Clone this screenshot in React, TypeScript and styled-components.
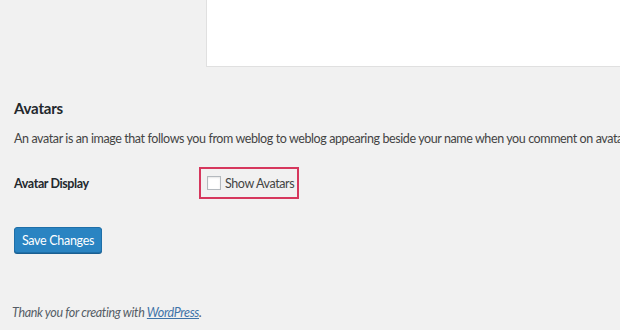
import styled, { createGlobalStyle } from "styled-components";

const GlobalStyle = createGlobalStyle`
  html, body {
    margin: 0;
    padding: 0;
    background: #f1f1f1;
    overflow: hidden;
  }
  body {
    font-family: Lato, "Open Sans", sans-serif;
    color: #444;
    font-size: 12.5px;
    letter-spacing: -0.4px;
  }
`;

const Page = styled.div`
  width: 620px;
  height: 330px;
  overflow: hidden;
  display: flex;
  flex-direction: column;
`;

const PreviewBox = styled.div`
  height: 66px;
  margin-left: 206px;
  background: #fff;
  border-left: 1px solid #e0e0e0;
  border-bottom: 1px solid #e0e0e0;
`;

const Content = styled.div`
  padding-left: 14px;
  display: flex;
  flex-direction: column;
`;

const Heading = styled.h2`
  margin: 31px 0 0;
  font-size: 15px;
  font-weight: 700;
  color: #23282d;
  line-height: 20px;
  letter-spacing: -0.2px;
`;

const Description = styled.p`
  margin: 12px 0 0;
  line-height: 18px;
  white-space: nowrap;
  color: #444;
`;

const SettingRow = styled.div`
  display: flex;
  align-items: center;
  margin-top: 19px;
`;

const RowLabel = styled.div`
  width: 185px;
  font-weight: 700;
  color: #23282d;
`;

const Highlight = styled.label`
  display: flex;
  align-items: center;
  gap: 4px;
  box-sizing: border-box;
  width: 100px;
  height: 32px;
  padding-left: 6px;
  border: 2px solid #d6375d;
  white-space: nowrap;
  color: #444;
`;

const CheckBox = styled.span`
  flex: none;
  width: 14px;
  height: 14px;
  background: #fff;
  border: 1px solid #b4b9be;
  box-shadow: inset 0 1px 2px rgba(0, 0, 0, 0.1);
  box-sizing: border-box;
`;

const SaveButton = styled.button`
  align-self: flex-start;
  margin-top: 28px;
  width: 88px;
  height: 26px;
  padding: 0;
  background: #2a84c2;
  border: 1px solid #1f6fa8;
  border-radius: 3px;
  color: #fff;
  font-family: Lato, "Open Sans", sans-serif;
  font-size: 12.5px;
  letter-spacing: -0.3px;
  box-shadow: 0 1px 0 #1a5f91;
`;

const Footer = styled.p`
  margin: 52px 0 0 -2px;
  font-style: italic;
  color: #555d66;
  letter-spacing: -0.35px;
`;

const FooterLink = styled.a`
  color: #3f73a8;
  text-decoration: underline;
`;

export default function App() {
  return (
    <Page>
      <GlobalStyle />
      <PreviewBox />
      <Content>
        <Heading>Avatars</Heading>
        <Description>
          An avatar is an image that follows you from weblog to weblog appearing beside your name when you comment on avatar enabled sites.
        </Description>
        <SettingRow>
          <RowLabel>Avatar Display</RowLabel>
          <Highlight>
            <CheckBox />
            Show Avatars
          </Highlight>
        </SettingRow>
        <SaveButton>Save Changes</SaveButton>
        <Footer>
          Thank you for creating with <FooterLink href="#">WordPress</FooterLink>.
        </Footer>
      </Content>
    </Page>
  );
}
